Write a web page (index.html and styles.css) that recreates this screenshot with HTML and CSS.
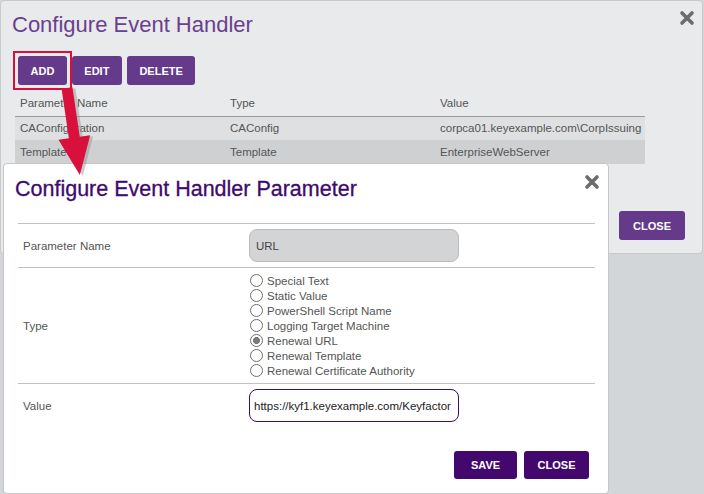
FILE: index.html
```html
<!DOCTYPE html>
<html lang="en">
<head>
<meta charset="utf-8">
<title>Configure Event Handler</title>
<link rel="stylesheet" href="styles.css">
</head>
<body>
<div class="stage">
  <section class="dlg-outer">
    <header class="dlg-head">
      <h1 class="title-outer">Configure Event Handler</h1>
      <svg class="x-icon x-outer" viewBox="0 0 16 16" aria-hidden="true"><path d="M3 3 L13 13 M13 3 L3 13"/></svg>
    </header>
    <div class="toolbar">
      <button class="btn btn-outer is-marked">ADD</button>
      <button class="btn btn-outer">EDIT</button>
      <button class="btn btn-outer">DELETE</button>
    </div>
    <table class="grid">
      <thead>
        <tr><th>Parameter Name</th><th>Type</th><th>Value</th></tr>
      </thead>
      <tbody>
        <tr class="row-a"><td>CAConfiguration</td><td>CAConfig</td><td>corpca01.keyexample.com\CorpIssuing</td></tr>
        <tr class="row-b"><td>Template</td><td>Template</td><td>EnterpriseWebServer</td></tr>
      </tbody>
    </table>
    <footer class="outer-foot">
      <button class="btn btn-outer btn-close-outer">CLOSE</button>
    </footer>
  </section>

  <section class="dlg-inner">
    <header class="inner-head">
      <h2 class="title-inner">Configure Event Handler Parameter</h2>
      <svg class="x-icon x-inner" viewBox="0 0 16 16" aria-hidden="true"><path d="M3 3 L13 13 M13 3 L3 13"/></svg>
    </header>
    <div class="form">
      <div class="form-row">
        <div class="label">Parameter Name</div>
        <div class="field"><input class="input input-disabled" type="text" value="URL" readonly></div>
      </div>
      <div class="form-row">
        <div class="label">Type</div>
        <div class="field radios">
          <label class="radio"><input type="radio" name="t"><span>Special Text</span></label>
          <label class="radio"><input type="radio" name="t"><span>Static Value</span></label>
          <label class="radio"><input type="radio" name="t"><span>PowerShell Script Name</span></label>
          <label class="radio"><input type="radio" name="t"><span>Logging Target Machine</span></label>
          <label class="radio"><input type="radio" name="t" checked><span>Renewal URL</span></label>
          <label class="radio"><input type="radio" name="t"><span>Renewal Template</span></label>
          <label class="radio"><input type="radio" name="t"><span>Renewal Certificate Authority</span></label>
        </div>
      </div>
      <div class="form-row form-row-last">
        <div class="label">Value</div>
        <div class="field"><input class="input input-active" type="text" value="https://kyf1.keyexample.com/Keyfactor"></div>
      </div>
    </div>
    <footer class="inner-foot">
      <button class="btn btn-inner btn-save">SAVE</button>
      <button class="btn btn-inner">CLOSE</button>
    </footer>
  </section>

  <svg class="arrow" viewBox="0 0 200 200" aria-hidden="true">
    <g transform="translate(70,89) rotate(-8.4)">
      <polygon class="arrow-shadow" points="-5.5,0 5.5,0 5.5,50 16,50 0,88 -16,50 -5.5,50"/>
    </g>
    <g transform="translate(67,88) rotate(-8.4)">
      <polygon class="arrow-body" points="-5.5,0 5.5,0 5.5,50 16,50 0,88 -16,50 -5.5,50"/>
    </g>
  </svg>
</div>
</body>
</html>
```

FILE: styles.css
```css
* { box-sizing: border-box; }

html, body {
  margin: 0;
  padding: 0;
}

body {
  background: #d3d6d8;
  font-family: "Liberation Sans", Arial, sans-serif;
  color: #555;
  width: 704px;
  height: 494px;
  overflow: hidden;
}

.stage {
  position: relative;
  width: 704px;
  height: 494px;
}

/* ---------- outer dialog ---------- */
.dlg-outer {
  width: 703px;
  height: 254px;
  background: #e9eaec;
  border: 1px solid #c9cacc;
  border-radius: 4px;
  padding: 11px 0 0 11px;
  display: flex;
  flex-direction: column;
}

.dlg-head {
  display: flex;
  justify-content: space-between;
  align-items: flex-start;
}

.title-outer {
  margin: 0;
  font-size: 22px;
  line-height: 26px;
  font-weight: normal;
  color: #6a3f8e;
}

.x-icon {
  width: 16px;
  height: 16px;
  fill: none;
  stroke: #6b6c6e;
  stroke-width: 3.6;
  stroke-linecap: round;
}

.x-outer {
  margin: -2px 7px 0 0;
}

.toolbar {
  display: flex;
  gap: 5px;
  margin: 18px 0 0 6px;
}

.btn {
  border: none;
  font-family: "Liberation Sans", Arial, sans-serif;
  font-weight: bold;
  font-size: 11px;
  color: #fff;
  border-radius: 3px;
  padding: 0 12.5px;
  cursor: pointer;
}

.btn-outer {
  height: 29px;
  background: #663a8a;
}

.is-marked {
  position: relative;
}

.is-marked::after {
  content: "";
  position: absolute;
  left: -5px;
  top: -5px;
  right: -5px;
  bottom: -5px;
  border: 2px solid #d8103b;
}

.grid {
  margin: 5px 0 0 3px;
  width: 630px;
  border-collapse: collapse;
  table-layout: fixed;
  font-size: 11.5px;
  color: #555;
}

.grid th,
.grid td {
  text-align: left;
  padding: 0 5px;
  white-space: nowrap;
  overflow: hidden;
  width: 210px;
}

.grid th {
  height: 26px;
  font-weight: normal;
  border-bottom: 1px solid #9c9c9c;
}

.grid td {
  height: 24px;
}

.row-a { background: #dfe0e2; }
.row-b { background: #cfd0d2; }

.outer-foot {
  display: flex;
  justify-content: flex-end;
  margin-top: 47px;
  padding-right: 17px;
}

.btn-close-outer {
  padding: 0 14px;
}

/* ---------- inner dialog ---------- */
.dlg-inner {
  position: absolute;
  left: 3px;
  top: 163px;
  width: 606px;
  height: 331px;
  background: #fff;
  border: 1px solid #c6c7c9;
  border-radius: 4px;
  display: flex;
  flex-direction: column;
}

.inner-head {
  display: flex;
  justify-content: space-between;
  align-items: flex-start;
  padding: 12px 8px 0 11px;
}

.title-inner {
  margin: 0;
  font-size: 21.5px;
  line-height: 26px;
  font-weight: normal;
  color: #3e0a6c;
  -webkit-text-stroke: 0.3px #3e0a6c;
}

.x-inner {
  margin-top: -2px;
}

.form {
  margin: 21px 13px 0 14px;
}

.form-row {
  display: grid;
  grid-template-columns: 231px 1fr;
  border-top: 1px solid #c2c2c2;
  padding: 5px 0;
}

.form-row-last {
  padding-bottom: 0;
}

.label {
  align-self: center;
  padding-left: 5px;
  font-size: 11.5px;
  color: #555;
}

.input {
  display: block;
  width: 210px;
  height: 33px;
  border-radius: 8px;
  font-family: "Liberation Sans", Arial, sans-serif;
  font-size: 11.5px;
  outline: none;
  margin: 0;
}

.input-disabled {
  background: #d3d4d6;
  border: 1px solid #bcbcbc;
  color: #444;
  padding: 0 6px;
}

.input-active {
  background: #fff;
  border: 1px solid #3e0a6c;
  color: #222;
  padding: 0 4px;
}

.radios {
  display: flex;
  flex-direction: column;
}

.radio {
  display: flex;
  align-items: center;
  height: 15px;
  font-size: 11.5px;
  color: #555;
}

.radio input {
  appearance: none;
  -webkit-appearance: none;
  width: 13px;
  height: 13px;
  margin: 0 4px 0 1px;
  border: 1px solid #6e6e6e;
  border-radius: 50%;
  background: #fff;
}

.radio input:checked {
  background: radial-gradient(circle, #7a7a7a 0 3.2px, #fff 3.8px);
}

.inner-foot {
  margin-top: auto;
  display: flex;
  justify-content: flex-end;
  gap: 7px;
  padding: 0 19px 14px 0;
}

.btn-inner {
  height: 28px;
  background: #42086e;
  padding: 0 13.5px;
}

.btn-save {
  min-width: 63px;
}

/* ---------- annotation arrow ---------- */
.arrow {
  position: absolute;
  left: 0;
  top: 0;
  width: 200px;
  height: 200px;
  pointer-events: none;
}

.arrow-shadow {
  fill: #8d8d8d;
  opacity: 0.45;
}

.arrow-body {
  fill: #d90f3c;
}
```
